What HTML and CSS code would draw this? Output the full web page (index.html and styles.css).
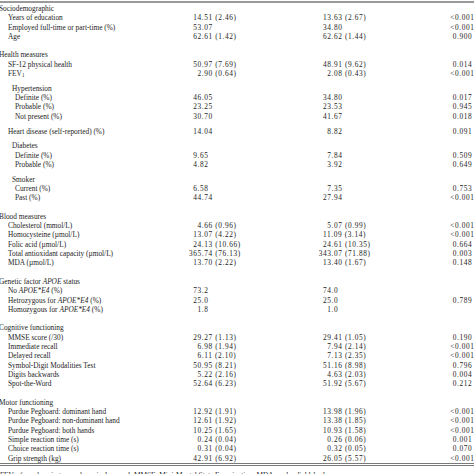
FILE: index.html
```html
<!DOCTYPE html>
<html>
<head>
<meta charset="utf-8">
<link rel="stylesheet" href="styles.css">
</head>
<body>
<div class="tbl">
  <div class="sec">
    <div class="row"><div class="c1 l0">Sociodemographic</div></div>
    <div class="row"><div class="c1 l1">Years of education</div><div class="c2">14.51 (2.46)</div><div class="c3">13.63 (2.67)</div><div class="c4">&lt;0.001</div></div>
    <div class="row"><div class="c1 l1">Employed full-time or part-time (%)</div><div class="c2">53.07</div><div class="c3">34.80</div><div class="c4">&lt;0.001</div></div>
    <div class="row"><div class="c1 l1">Age</div><div class="c2">62.61 (1.42)</div><div class="c3">62.62 (1.44)</div><div class="c4">0.900</div></div>
  </div>

  <div class="sec">
    <div class="row"><div class="c1 l0">Health measures</div></div>
    <div class="grp">
      <div class="row"><div class="c1 l1">SF-12 physical health</div><div class="c2">50.97 (7.69)</div><div class="c3">48.91 (9.62)</div><div class="c4">0.014</div></div>
      <div class="row"><div class="c1 l1">FEV<sub>1</sub></div><div class="c2"><span class="d1">2.90 (0.64)</span></div><div class="c3"><span class="d1">2.08 (0.43)</span></div><div class="c4">&lt;0.001</div></div>
    </div>
    <div class="grp">
      <div class="row"><div class="c1 gh">Hypertension</div></div>
      <div class="row"><div class="c1 l2">Definite (%)</div><div class="c2">46.05</div><div class="c3">34.80</div><div class="c4">0.017</div></div>
      <div class="row"><div class="c1 l2">Probable (%)</div><div class="c2">23.25</div><div class="c3">23.53</div><div class="c4">0.945</div></div>
      <div class="row"><div class="c1 l2">Not present (%)</div><div class="c2">30.70</div><div class="c3">41.67</div><div class="c4">0.018</div></div>
    </div>
    <div class="grp">
      <div class="row"><div class="c1 l1">Heart disease (self-reported) (%)</div><div class="c2">14.04</div><div class="c3"><span class="d1">8.82</span></div><div class="c4">0.091</div></div>
    </div>
    <div class="grp">
      <div class="row"><div class="c1 gh">Diabetes</div></div>
      <div class="row"><div class="c1 l2">Definite (%)</div><div class="c2">9.65</div><div class="c3"><span class="d1">7.84</span></div><div class="c4">0.509</div></div>
      <div class="row"><div class="c1 l2">Probable (%)</div><div class="c2">4.82</div><div class="c3"><span class="d1">3.92</span></div><div class="c4">0.649</div></div>
    </div>
    <div class="grp">
      <div class="row"><div class="c1 gh">Smoker</div></div>
      <div class="row"><div class="c1 l2">Current (%)</div><div class="c2">6.58</div><div class="c3"><span class="d1">7.35</span></div><div class="c4">0.753</div></div>
      <div class="row"><div class="c1 l2">Past (%)</div><div class="c2">44.74</div><div class="c3">27.94</div><div class="c4">&lt;0.001</div></div>
    </div>
  </div>

  <div class="sec">
    <div class="row"><div class="c1 l0">Blood measures</div></div>
    <div class="row"><div class="c1 l1">Cholesterol (mmol/L)</div><div class="c2"><span class="d1">4.66 (0.96)</span></div><div class="c3"><span class="d1">5.07 (0.99)</span></div><div class="c4">&lt;0.001</div></div>
    <div class="row"><div class="c1 l1">Homocysteine (µmol/L)</div><div class="c2">13.07 (4.22)</div><div class="c3">11.09 (3.14)</div><div class="c4">&lt;0.001</div></div>
    <div class="row"><div class="c1 l1">Folic acid (µmol/L)</div><div class="c2">24.13 (10.66)</div><div class="c3">24.61 (10.35)</div><div class="c4">0.664</div></div>
    <div class="row"><div class="c1 l1">Total antioxidant capacity (µmol/L)</div><div class="c2"><span class="d3">365.74 (76.13)</span></div><div class="c3"><span class="d3">343.07 (71.88)</span></div><div class="c4">0.003</div></div>
    <div class="row"><div class="c1 l1">MDA (µmol/L)</div><div class="c2">13.70 (2.22)</div><div class="c3">13.40 (1.67)</div><div class="c4">0.148</div></div>
  </div>

  <div class="sec">
    <div class="row"><div class="c1 l0">Genetic factor <i>APOE</i> status</div></div>
    <div class="row"><div class="c1 l1">No <i>APOE*E4</i> (%)</div><div class="c2">73.2</div><div class="c3">74.0</div><div class="c4"></div></div>
    <div class="row"><div class="c1 l1">Hetrozygous for <i>APOE*E4</i> (%)</div><div class="c2">25.0</div><div class="c3">25.0</div><div class="c4">0.789</div></div>
    <div class="row"><div class="c1 l1">Homozygous for <i>APOE*E4</i> (%)</div><div class="c2"><span class="d1">1.8</span></div><div class="c3"><span class="d1">1.0</span></div><div class="c4"></div></div>
  </div>

  <div class="sec">
    <div class="row"><div class="c1 l0">Cognitive functioning</div></div>
    <div class="row"><div class="c1 l1">MMSE score (/30)</div><div class="c2">29.27 (1.13)</div><div class="c3">29.41 (1.05)</div><div class="c4">0.190</div></div>
    <div class="row"><div class="c1 l1">Immediate recall</div><div class="c2"><span class="d1">6.98 (1.94)</span></div><div class="c3"><span class="d1">7.94 (2.14)</span></div><div class="c4">&lt;0.001</div></div>
    <div class="row"><div class="c1 l1">Delayed recall</div><div class="c2"><span class="d1">6.11 (2.10)</span></div><div class="c3"><span class="d1">7.13 (2.35)</span></div><div class="c4">&lt;0.001</div></div>
    <div class="row"><div class="c1 l1">Symbol-Digit Modalities Test</div><div class="c2">50.95 (8.21)</div><div class="c3">51.16 (8.98)</div><div class="c4">0.796</div></div>
    <div class="row"><div class="c1 l1">Digits backwards</div><div class="c2"><span class="d1">5.22 (2.16)</span></div><div class="c3"><span class="d1">4.63 (2.03)</span></div><div class="c4">0.004</div></div>
    <div class="row"><div class="c1 l1">Spot-the-Word</div><div class="c2">52.64 (6.23)</div><div class="c3">51.92 (5.67)</div><div class="c4">0.212</div></div>
  </div>

  <div class="sec last">
    <div class="row"><div class="c1 l0">Motor functioning</div></div>
    <div class="row"><div class="c1 l1">Purdue Pegboard: dominant hand</div><div class="c2">12.92 (1.91)</div><div class="c3">13.98 (1.96)</div><div class="c4">&lt;0.001</div></div>
    <div class="row"><div class="c1 l1">Purdue Pegboard: non-dominant hand</div><div class="c2">12.61 (1.92)</div><div class="c3">13.38 (1.85)</div><div class="c4">&lt;0.001</div></div>
    <div class="row"><div class="c1 l1">Purdue Pegboard: both hands</div><div class="c2">10.25 (1.65)</div><div class="c3">10.93 (1.58)</div><div class="c4">&lt;0.001</div></div>
    <div class="row"><div class="c1 l1">Simple reaction time (s)</div><div class="c2"><span class="d1">0.24 (0.04)</span></div><div class="c3"><span class="d1">0.26 (0.06)</span></div><div class="c4">0.001</div></div>
    <div class="row"><div class="c1 l1">Choice reaction time (s)</div><div class="c2"><span class="d1">0.31 (0.04)</span></div><div class="c3"><span class="d1">0.32 (0.05)</span></div><div class="c4">0.070</div></div>
    <div class="row"><div class="c1 l1">Grip strength (kg)</div><div class="c2">42.91 (6.92)</div><div class="c3">26.05 (5.57)</div><div class="c4">&lt;0.001</div></div>
  </div>
  <div class="note">FEV<sub>1</sub>, forced expiratory volume in 1 second; MMSE, Mini-Mental State Examination; MDA, malondialdehyde.</div>
</div>
</body>
</html>
```

FILE: styles.css
```css
html, body {
  margin: 0;
  padding: 0;
  background: #ffffff;
  overflow: hidden;
}
body {
  width: 474px;
  height: 474px;
  font-family: "Liberation Serif", "Times New Roman", serif;
  font-size: 7.35px;
  color: #242424;
}
.tbl {
  width: 500px;
  margin-top: 1px;
  border-top: 2px solid #9a9a9a;
  padding-top: 1px;
}
.sec + .sec {
  margin-top: 9px;
}
.grp + .grp {
  margin-top: 5.4px;
}
.sec.last {
  border-bottom: 3px double #7a7a7a;
}
.row {
  display: grid;
  grid-template-columns: 193.3px 129.7px 109.5px 60px;
  height: 9.35px;
  line-height: 9.35px;
  white-space: nowrap;
}
.c2, .c3, .c4 {
  letter-spacing: 0.6px;
}
.c4 {
  text-align: center;
}
.l0 { margin-left: -1px; }
.l1 { padding-left: 8px; }
.gh { padding-left: 12px; }
.l2 { padding-left: 15px; }
.d1 { padding-left: calc(0.5em + 0.6px); }
.d3 { margin-left: calc(-0.5em - 0.6px); }
sub {
  font-size: 0.7em;
  line-height: 0;
  vertical-align: -0.25em;
}
.note {
  margin-top: 4.5px;
  line-height: 9.35px;
  white-space: nowrap;
}
```
